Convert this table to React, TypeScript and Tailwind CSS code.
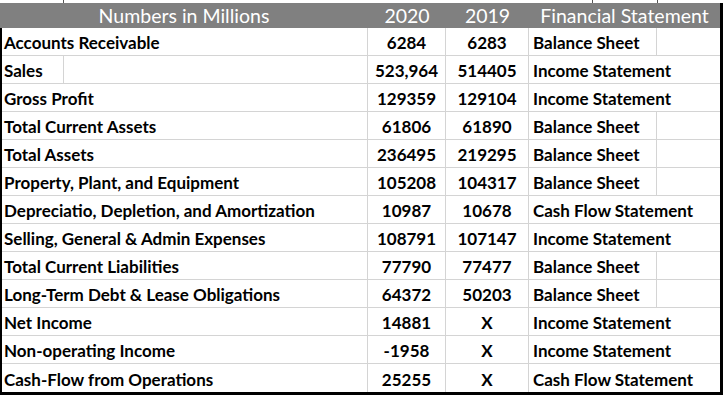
type Row = {
  label: string
  y2020: string
  y2019: string
  statement: string
}

const rows: Row[] = [
  { label: 'Accounts Receivable', y2020: '6284', y2019: '6283', statement: 'Balance Sheet' },
  { label: 'Sales', y2020: '523,964', y2019: '514405', statement: 'Income Statement' },
  { label: 'Gross Profit', y2020: '129359', y2019: '129104', statement: 'Income Statement' },
  { label: 'Total Current Assets', y2020: '61806', y2019: '61890', statement: 'Balance Sheet' },
  { label: 'Total Assets', y2020: '236495', y2019: '219295', statement: 'Balance Sheet' },
  { label: 'Property, Plant, and Equipment', y2020: '105208', y2019: '104317', statement: 'Balance Sheet' },
  { label: 'Depreciatio, Depletion, and Amortization', y2020: '10987', y2019: '10678', statement: 'Cash Flow Statement' },
  { label: 'Selling, General & Admin Expenses', y2020: '108791', y2019: '107147', statement: 'Income Statement' },
  { label: 'Total Current Liabilities', y2020: '77790', y2019: '77477', statement: 'Balance Sheet' },
  { label: 'Long-Term Debt & Lease Obligations', y2020: '64372', y2019: '50203', statement: 'Balance Sheet' },
  { label: 'Net Income', y2020: '14881', y2019: 'X', statement: 'Income Statement' },
  { label: 'Non-operating Income', y2020: '-1958', y2019: 'X', statement: 'Income Statement' },
  { label: 'Cash-Flow from Operations', y2020: '25255', y2019: 'X', statement: 'Cash Flow Statement' },
]

export default function App() {
  return (
    <div
      className="w-[723px] h-[397px] bg-white overflow-hidden"
      style={{ fontFamily: 'Lato, "Open Sans", sans-serif' }}
    >
      {/* stray gridline ticks above the header */}
      <div className="flex h-[3px]">
        <div className="w-[64px] border-r border-[#555]" />
        <div className="w-[529px] border-r border-[#555]" />
        <div className="w-[65px] border-r border-[#555]" />
      </div>

      <div className="w-[723px] border-r-[3px] border-black">
        {/* header */}
        <div className="flex h-[25px] bg-[#808080] text-white text-[19.5px] leading-none">
          <div className="w-[368px] flex items-center justify-center">Numbers in Millions</div>
          <div className="w-[78px] flex items-center justify-center">2020</div>
          <div className="w-[83px] flex items-center justify-center">2019</div>
          <div className="flex-1 flex items-center justify-center whitespace-nowrap">Financial Statement</div>
        </div>

        {/* body */}
        <div className="border-l-2 border-b-[3px] border-black text-black font-bold text-[17px] leading-none">
          {rows.map((r, i) => {
            const last = i === rows.length - 1
            const split = r.label === 'Sales'
            const short = r.statement === 'Balance Sheet'
            return (
              <div
                key={r.label}
                className={`flex h-[28px] ${last ? '' : 'border-b border-[#d4d4d4]'}`}
              >
                <div className="w-[366px] flex border-r border-[#d4d4d4] whitespace-nowrap">
                  {split ? (
                    <>
                      <div className="w-[62px] flex items-center pt-[2px] pl-[2px] border-r border-[#d4d4d4]">{r.label}</div>
                      <div className="flex-1" />
                    </>
                  ) : (
                    <div className="flex items-center pt-[2px] pl-[2px]">{r.label}</div>
                  )}
                </div>
                <div className="w-[78px] flex items-center justify-center pt-[2px] border-r border-[#d4d4d4]">{r.y2020}</div>
                <div className="w-[83px] flex items-center justify-center pt-[2px] border-r border-[#d4d4d4]">{r.y2019}</div>
                <div className="flex-1 flex whitespace-nowrap">
                  {short ? (
                    <>
                      <div className="w-[128px] flex items-center pt-[2px] pl-[4px] border-r border-[#d4d4d4]">{r.statement}</div>
                      <div className="flex-1" />
                    </>
                  ) : (
                    <div className="flex items-center pt-[2px] pl-[4px]">{r.statement}</div>
                  )}
                </div>
              </div>
            )
          })}
        </div>
      </div>
    </div>
  )
}
